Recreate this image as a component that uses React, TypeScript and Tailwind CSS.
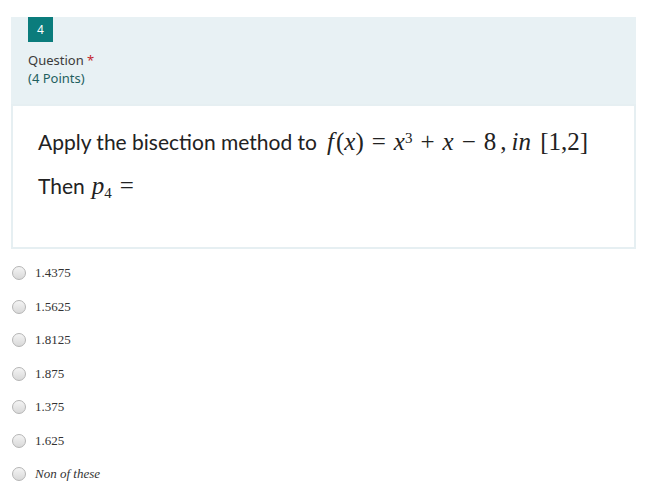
const options = ["1.4375", "1.5625", "1.8125", "1.875", "1.375", "1.625"];

function Radio() {
  return (
    <span className="inline-block h-[14px] w-[14px] shrink-0 rounded-full border border-[#b5b5b5] bg-gradient-to-b from-[#f4f4f4] to-[#d9d9d9]" />
  );
}

function Op({ c }: { c: string }) {
  return <span className="mx-[8px]">{c}</span>;
}

export default function App() {
  return (
    <div className="min-h-[497px] w-[647px] bg-white pt-[17px]">
      <div className="mx-[11px] w-[625px] bg-[#e8f1f4]">
        <div className="px-[17px] pb-[17px]">
          <div className="flex h-[25px] w-[25px] items-center justify-center bg-[#0b7c7c] text-[12px] text-white [font-family:'Noto_Sans',sans-serif]">
            4
          </div>
          <div className="mt-[9px] text-[13px] leading-[18px] text-[#3b3b3b] [font-family:'Noto_Sans',sans-serif]">
            Question <span className="text-[#c4262e]">*</span>
          </div>
          <div className="text-[13px] leading-[18px] text-[#1f5f5f] [font-family:'Noto_Sans',sans-serif]">
            (4 Points)
          </div>
        </div>
        <div className="h-[145px] border-2 border-[#e6eff2] bg-white pl-[25px] pt-[22px] text-[#222]">
          <div className="flex items-baseline whitespace-nowrap text-[21px] leading-[28px]">
            <span className="[font-family:Lato,sans-serif]">Apply the bisection method to</span>
            <span className="ml-[10px] text-[25px] [font-family:'Liberation_Serif',serif]">
              <i>f</i>
              <span className="ml-[2px]">(</span>
              <i>x</i>)<Op c="=" />
              <i>x</i>
              <sup className="text-[15px]">3</sup>
              <Op c="+" />
              <i>x</i>
              <Op c="−" />8<span className="ml-[4px] mr-[5px]">,</span>
              <i>in</i> <span className="ml-[3px]">[1,2]</span>
            </span>
          </div>
          <div className="mt-[16px] flex items-baseline whitespace-nowrap text-[21px] leading-[28px]">
            <span className="[font-family:Lato,sans-serif]">Then</span>
            <span className="ml-[7px] text-[25px] [font-family:'Liberation_Serif',serif]">
              <i>p</i>
              <sub className="text-[15px]">4</sub>
              <Op c="=" />
            </span>
          </div>
        </div>
      </div>
      <div className="mt-[15px] flex flex-col gap-[15px] pl-[12px] text-[13px] leading-[18.5px] text-[#333] [font-family:'Liberation_Serif',serif]">
        {options.map((o) => (
          <label key={o} className="flex items-center gap-[9px]">
            <Radio />
            <span>{o}</span>
          </label>
        ))}
        <label className="flex items-center gap-[9px]">
          <Radio />
          <span className="italic">Non of these</span>
        </label>
      </div>
    </div>
  );
}
